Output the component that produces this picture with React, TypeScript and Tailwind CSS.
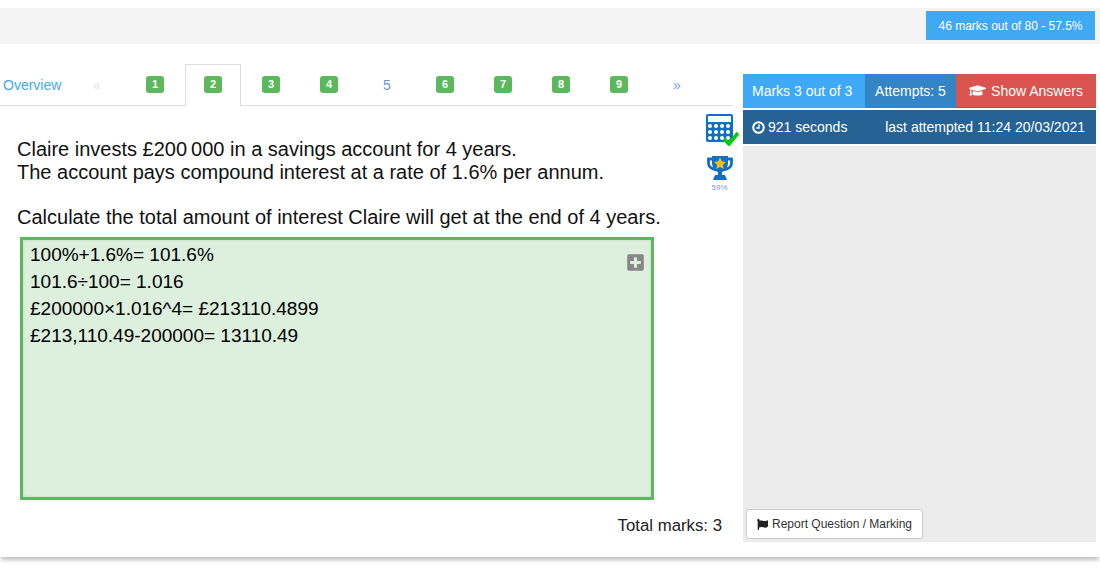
import { FaFlag, FaGraduationCap, FaPlusSquare } from 'react-icons/fa'

const tabs = ['1', '2', '3', '4', '5', '6', '7', '8', '9']
const answerLines = ['100%+1.6%= 101.6%', '101.6÷100= 1.016', '£200000×1.016^4= £213110.4899', '£213,110.49-200000= 13110.49']

function CalculatorIcon() {
  return (
    <svg width="27" height="28" viewBox="0 0 27 28" className="block">
      <rect x="0" y="0" width="27" height="28" rx="2" fill="#0f6fc0" />
      <rect x="2" y="2" width="23" height="6" fill="#fff" />
      {[12, 18, 24].map((cy) =>
        [4, 10, 16, 22].map((cx) => <circle key={`${cx}-${cy}`} cx={cx} cy={cy} r="2" fill="#fff" />),
      )}
    </svg>
  )
}

function CheckIcon() {
  return (
    <svg width="18" height="15" viewBox="0 0 18 15" className="block">
      <path d="M2 8l5 5L16 2" fill="none" stroke="#00d000" strokeWidth="3.6" />
    </svg>
  )
}

function TrophyIcon() {
  return (
    <svg width="26" height="25" viewBox="0 0 26 25" className="block">
      <path d="M6 3H1.5v4c0 4 3 6 7.5 7" fill="none" stroke="#0f6fc0" strokeWidth="2.8" />
      <path d="M20 3h4.500v4c0 4-3 6-7.500 7" fill="none" stroke="#0f6fc0" strokeWidth="2.8" />
      <path d="M5 0h16v7c0 5-4 9-6 9v3h3l2 5H6l2-5h3v-3c-2 0-6-4-6-9z" fill="#0f6fc0" />
      <path d="M13 1.5l1.900 3.800 4.100.6-3 2.900.7 4.100-3.700-2-3.700 2 .7-4.100-3-2.900 4.100-.6z" fill="#f5b921" />
    </svg>
  )
}

function ClockIcon() {
  return (
    <svg width="13" height="13" viewBox="0 0 13 13" className="block">
      <circle cx="6.5" cy="6.5" r="5.3" fill="none" stroke="#fff" strokeWidth="2" />
      <path d="M7 3.300v3.700H4.300" fill="none" stroke="#fff" strokeWidth="1.400" />
    </svg>
  )
}

export default function App() {
  return (
    <div className="h-[570px] w-[1100px] overflow-hidden bg-white pt-2 font-['Liberation_Sans',Arial,sans-serif]">
      <div className="flex h-9 justify-end bg-[#f4f4f4] pr-[5px] pt-[3px]">
        <div className="flex h-[29px] w-[169px] items-center justify-center bg-[#3fa9f5] text-xs text-white">
          46 marks out of 80 - 57.5%
        </div>
      </div>

      <div className="flex h-[513px] shadow-[0_4px_4px_-1px_rgba(0,0,0,0.25)]">
        <div className="w-[733px] pt-5">
          <div className="flex h-[42px] border-b border-[#dddddd]">
            <div className="flex w-[68px] items-center pl-[3px] text-sm text-[#3fa9f5]">Overview</div>
            <div className="flex w-[58px] items-center justify-center text-sm text-[#e3e3e3]">«</div>
            {tabs.map((tab) => (
              <div
                key={tab}
                className={
                  tab === '2'
                    ? 'z-10 mx-px -mb-px flex w-[56px] items-center justify-center border border-b-0 border-[#dddddd] bg-white pb-[2px]'
                    : 'flex w-[58px] items-center justify-center'
                }
              >
                {tab === '5' ? (
                  <span className="text-sm text-[#6c93d8]">5</span>
                ) : (
                  <span className="flex h-[17px] w-[18px] items-center justify-center rounded-[3px] bg-[#5cb85c] text-[11px] font-bold text-white">
                    {tab}
                  </span>
                )}
              </div>
            ))}
            <div className="flex w-[58px] items-center justify-center text-sm text-[#6c9ff0]">»</div>
          </div>

          <div className="flex">
            <div className="w-[706px] pl-[17px] pt-8 text-[20px] leading-[23px] text-[#111111]">
              <p>Claire invests £200&#8201;000 in a savings account for 4 years.</p>
              <p>The account pays compound interest at a rate of 1.6% per annum.</p>
              <p className="mt-[22px]">Calculate the total amount of interest Claire will get at the end of 4 years.</p>

              <div className="relative mt-[8px] ml-[3px] h-[263px] w-[634px] border-[3px] border-[#5cb85c] bg-[#ddefdd] pl-[7px] pt-px text-[19px] text-black shadow-[inset_0_0_3px_rgba(0,0,0,0.12)]">
                {answerLines.map((line) => (
                  <p key={line} className="leading-[27px]">{line}</p>
                ))}
                <FaPlusSquare className="absolute right-[6px] top-[13px] text-[19px] text-[#888888]" />
              </div>

              <p className="mt-[15px] w-[705px] text-right text-[16.800px] leading-[22px] text-[#222222]">Total marks: 3</p>
            </div>

            <div className="flex w-[27px] flex-col items-center pt-[8px]">
              <div className="relative">
                <CalculatorIcon />
                <div className="absolute -right-[7px] top-[17px]">
                  <CheckIcon />
                </div>
              </div>
              <div className="mt-[14px]">
                <TrophyIcon />
              </div>
              <span className="mt-[2px] text-[8px] leading-[10px] text-[#7c9bd0]">59%</span>
            </div>
          </div>
        </div>

        <div className="ml-[10px] w-[353px] pt-[30px]">
          <div className="flex h-[34px] text-sm text-white">
            <div className="flex w-[122px] items-center bg-[#3fa9f5] pl-[9px]">Marks 3 out of 3</div>
            <div className="flex w-[91px] items-center justify-center bg-[#3385c6]">Attempts: 5</div>
            <div className="flex w-[140px] items-center justify-center gap-[5px] border-b border-[#c9423f] bg-[#d9534f]">
              <FaGraduationCap className="text-[17px]" />
              Show Answers
            </div>
          </div>
          <div className="mt-[2px] flex h-[34px] items-center justify-between bg-[#266293] pl-[9px] pr-[11px] text-sm text-white">
            <span className="flex items-center gap-[3px]">
              <ClockIcon />
              921 seconds
            </span>
            <span>last attempted 11:24 20/03/2021</span>
          </div>
          <div className="mt-[2px] flex h-[396px] items-end bg-[#ececec] pb-[3px] pl-[3px]">
            <button
              type="button"
              className="flex h-[30px] w-[177px] items-center justify-center gap-1 rounded-[3px] border border-[#cccccc] bg-white text-xs text-[#333333]"
            >
              <FaFlag className="text-[11px] text-[#222222]" />
              Report Question / Marking
            </button>
          </div>
        </div>
      </div>
    </div>
  )
}
